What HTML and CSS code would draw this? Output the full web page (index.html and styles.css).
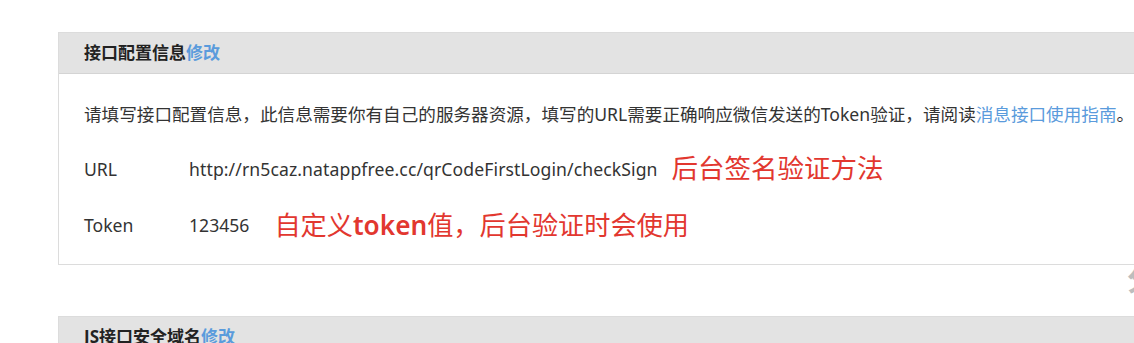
FILE: index.html
```html
<!DOCTYPE html>
<html lang="zh-CN">
<head>
<meta charset="utf-8">
<title>接口配置信息</title>
<link rel="stylesheet" href="styles.css">
</head>
<body>
<div class="page">
  <section class="card">
    <div class="card-head">接口配置信息<a class="link">修改</a></div>
    <div class="card-body">
      <div class="row">请填写接口配置信息，此信息需要你有自己的服务器资源，填写的URL需要正确响应微信发送的Token验证，请阅读<a class="link">消息接口使用指南</a>。</div>
      <div class="row">
        <span class="label">URL</span>
        <span class="value value-url">http://rn5caz.natappfree.cc/qrCodeFirstLogin/checkSign</span>
        <span class="note note-url">后台签名验证方法</span>
      </div>
      <div class="row">
        <span class="label">Token</span>
        <span class="value">123456</span>
        <span class="note note-token">自定义<b>token</b>值，后台验证时会使用</span>
      </div>
    </div>
  </section>
  <section class="card card-second">
    <div class="card-head">JS接口安全域名<a class="link">修改</a></div>
  </section>
  <span class="edge-glyph">分</span>
</div>
</body>
</html>
```

FILE: styles.css
```css
html, body {
  margin: 0;
  padding: 0;
  background: #ffffff;
  overflow: hidden;
}
body {
  width: 1134px;
  height: 343px;
  font-family: "Noto Sans", "Noto Sans CJK SC", sans-serif;
  color: #333333;
}
.page {
  position: relative;
  padding: 32px 0 0 58px;
}
.card {
  width: 1100px;
  border: 1px solid #dcdcdc;
  border-right: none;
  background: #fff;
}
.card-second {
  margin-top: 51px;
}
.card-head {
  height: 40px;
  line-height: 40px;
  padding-left: 25px;
  background: #e3e3e3;
  border-bottom: 1px solid #d4d4d4;
  font-size: 17px;
  font-weight: bold;
  color: #222;
}
.link {
  color: #5a9bdc;
  text-decoration: none;
  font-weight: inherit;
}
.card-body {
  padding: 11px 0 11px 25px;
}
.row {
  height: 56px;
  display: flex;
  align-items: center;
  font-size: 17.6px;
  white-space: nowrap;
}
.label {
  width: 105px;
  flex: none;
}
.value {
  flex: none;
}
.value-url {
  letter-spacing: 0.1px;
}
.note {
  color: #e2372f;
  font-size: 26.5px;
  margin-top: -5px;
}
.note-url {
  margin-left: 14px;
}
.note-token {
  margin-left: 25px;
  margin-top: -3px;
  font-size: 26.2px;
}
.note b {
  font-weight: 600;
}
.edge-glyph {
  position: absolute;
  left: 1127px;
  top: 264px;
  font-size: 30px;
  font-weight: bold;
  color: #bdbdbd;
  line-height: 1;
}
```
